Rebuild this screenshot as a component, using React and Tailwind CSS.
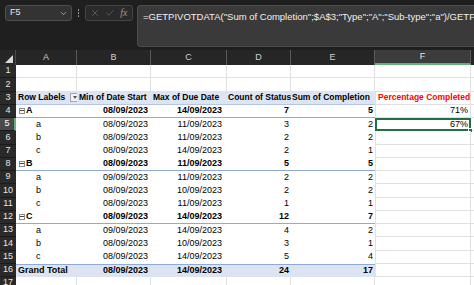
import React from 'react';
import { X, Check, ChevronDown } from 'lucide-react';

const cols = [
  { key: 'A', w: 'w-[61px]' },
  { key: 'B', w: 'w-[74px]' },
  { key: 'C', w: 'w-[76px]' },
  { key: 'D', w: 'w-[64px]' },
  { key: 'E', w: 'w-[84px]' },
  { key: 'F', w: 'w-[96px]' },
];

// pivot rows
const rows = [
  { n: 4, label: 'A', start: '08/09/2023', due: '14/09/2023', count: '7', sum: '5', pct: '71%', kind: 'group' },
  { n: 5, label: 'a', start: '08/09/2023', due: '11/09/2023', count: '3', sum: '2', pct: '67%', kind: 'item', selected: true },
  { n: 6, label: 'b', start: '08/09/2023', due: '11/09/2023', count: '2', sum: '2', kind: 'item' },
  { n: 7, label: 'c', start: '08/09/2023', due: '14/09/2023', count: '2', sum: '1', kind: 'item' },
  { n: 8, label: 'B', start: '08/09/2023', due: '11/09/2023', count: '5', sum: '5', kind: 'group' },
  { n: 9, label: 'a', start: '09/09/2023', due: '11/09/2023', count: '2', sum: '2', kind: 'item' },
  { n: 10, label: 'b', start: '08/09/2023', due: '10/09/2023', count: '2', sum: '2', kind: 'item' },
  { n: 11, label: 'c', start: '08/09/2023', due: '11/09/2023', count: '1', sum: '1', kind: 'item' },
  { n: 12, label: 'C', start: '08/09/2023', due: '14/09/2023', count: '12', sum: '7', kind: 'group' },
  { n: 13, label: 'a', start: '09/09/2023', due: '14/09/2023', count: '4', sum: '2', kind: 'item' },
  { n: 14, label: 'b', start: '08/09/2023', due: '10/09/2023', count: '3', sum: '1', kind: 'item' },
  { n: 15, label: 'c', start: '08/09/2023', due: '14/09/2023', count: '5', sum: '4', kind: 'item' },
  { n: 16, label: 'Grand Total', start: '08/09/2023', due: '14/09/2023', count: '24', sum: '17', kind: 'total' },
];

function RowHead({ n, active }) {
  return (
    <div
      className={
        'w-[16px] shrink-0 h-full flex items-center justify-center text-[9px] border-b border-[#1a1a1a] ' +
        (active ? 'bg-[#4a4a4a] text-white border-r-2 border-r-[#5fb37a]' : 'bg-[#2a2a2a] text-[#e6e6e6]')
      }
    >
      {n}
    </div>
  );
}

function EmptyRow({ n }) {
  return (
    <div className="flex h-[13.25px]">
      <RowHead n={n} />
      {cols.map((c) => (
        <div key={c.key} className={c.w + ' shrink-0 h-full bg-white border-r border-b border-[#e1e1e1]'} />
      ))}
      <div className="flex-1 h-full bg-white border-b border-[#e1e1e1]" />
    </div>
  );
}

function MinusBox() {
  return (
    <span className="inline-flex w-[6px] h-[6px] border border-[#8a8a8a] items-center justify-center mr-[1px] bg-white">
      <span className="w-[4px] h-px bg-[#444]" />
    </span>
  );
}

function PivotRow({ r }) {
  const bold = r.kind !== 'item';
  const pivotBg =
    r.kind === 'total'
      ? 'bg-[#dce4f2] border-t border-[#8ea9db]'
      : r.kind === 'group'
      ? 'bg-white border-b border-[#8ea9db]'
      : 'bg-white';
  const w = bold ? 'font-bold' : '';
  return (
    <div className="flex h-[13.25px]">
      <RowHead n={r.n} active={r.selected} />
      <div className={'flex w-[359px] shrink-0 h-full text-[9px] text-black ' + pivotBg + ' ' + w}>
        <div className="w-[61px] shrink-0 flex items-center overflow-hidden whitespace-nowrap">
          {r.kind === 'group' && (
            <span className="flex items-center pl-[3px]">
              <MinusBox />
              {r.label}
            </span>
          )}
          {r.kind === 'item' && <span className="pl-[20px]">{r.label}</span>}
          {r.kind === 'total' && <span className="pl-[2px]">{r.label}</span>}
        </div>
        <div className="w-[74px] shrink-0 flex items-center justify-end pr-[3px]">{r.start}</div>
        <div className="w-[76px] shrink-0 flex items-center justify-end pr-[5px]">{r.due}</div>
        <div className="w-[64px] shrink-0 flex items-center justify-end pr-[2px]">{r.count}</div>
        <div className="w-[84px] shrink-0 flex items-center justify-end pr-[2px]">{r.sum}</div>
      </div>
      <div
        className={
          'w-[96px] shrink-0 h-full bg-white flex items-center justify-end text-[9px] text-black relative ' +
          (r.selected ? 'border-2 border-[#1e7145] pr-[1px]' : 'border-l border-r border-b border-[#e1e1e1] pr-[2px]')
        }
      >
        {r.pct}
        {r.selected && (
          <span className="absolute right-[-4px] bottom-[-4px] w-[5px] h-[5px] bg-[#1e7145] border border-white" />
        )}
      </div>
      <div className="flex-1 h-full bg-white border-b border-[#e1e1e1]" />
    </div>
  );
}

export default function App() {
  const formula =
    '=GETPIVOTDATA("Sum of Completion";$A$3;"Type";"A";"Sub-type";"a")/GETPIVOTDATA("Count of Status";$A$3;"Type";"A";"Sub-type";"a")';

  return (
    <div className="w-[474px] h-[285px] overflow-hidden bg-[#1f1f1f] font-['Liberation_Sans',sans-serif]">
      {/* Formula bar */}
      <div className="flex items-start h-[50px] pt-[5px]">
        <div className="ml-[5px] w-[67px] h-[16px] shrink-0 rounded-[3px] bg-[#333333] border border-[#4d4d4d] flex items-center justify-between pl-[4px] pr-[3px] text-[9px] text-[#e8e8e8]">
          <span>F5</span>
          <ChevronDown size={9} strokeWidth={2} className="text-[#bdbdbd]" />
        </div>
        <div className="w-[13px] shrink-0 flex flex-col items-center pt-[4px] gap-[1.5px]">
          <span className="w-[1.5px] h-[1.5px] bg-[#aaa] rounded-full" />
          <span className="w-[1.5px] h-[1.5px] bg-[#aaa] rounded-full" />
          <span className="w-[1.5px] h-[1.5px] bg-[#aaa] rounded-full" />
        </div>
        <div className="w-[48px] h-[16px] shrink-0 rounded-[3px] bg-[#2a2a2a] border border-[#454545] flex items-center justify-around px-[2px] text-[#777]">
          <X size={10} strokeWidth={1.5} />
          <Check size={10} strokeWidth={1.5} />
          <span className="font-['Liberation_Serif',serif] italic text-[10px] text-[#9a9a9a] leading-none">fx</span>
        </div>
        <div className="ml-[4px] flex-1 h-[42px] rounded-l-[4px] bg-[#3a3a3a] border border-r-0 border-[#4d4d4d] pl-[5px] pt-[6px] overflow-hidden">
          <div className="whitespace-nowrap text-[9.5px] text-[#f0f0f0] leading-none">{formula}</div>
        </div>
      </div>

      {/* Column headers */}
      <div className="flex h-[15px] bg-[#262626]">
        <div className="w-[16px] shrink-0 h-full relative border-r border-[#4a4a4a]">
          <span className="absolute right-[2px] bottom-[2px] w-0 h-0 border-l-[8px] border-l-transparent border-b-[8px] border-b-[#d8d8d8]" />
        </div>
        {cols.map((c) => (
          <div
            key={c.key}
            className={
              c.w +
              ' shrink-0 h-full flex items-center justify-center text-[9px] ' +
              (c.key === 'F'
                ? 'bg-[#3c3c3c] text-[#e8e8e8] border-b-2 border-[#5fb37a] border-r border-r-[#5a5a5a]'
                : 'text-[#cfcfcf] border-r border-[#5a5a5a]')
            }
          >
            {c.key}
          </div>
        ))}
        <div className="flex-1" />
      </div>

      <EmptyRow n={1} />
      <EmptyRow n={2} />

      {/* Pivot header row */}
      <div className="flex h-[13.25px]">
        <RowHead n={3} />
        <div className="flex w-[359px] shrink-0 h-full bg-[#dde5f3] border-b border-[#b4c6e7] text-[8.5px] font-bold text-black whitespace-nowrap">
          <div className="w-[61px] shrink-0 flex items-center pl-[2px] overflow-hidden">
            <span>Row Labels</span>
            <span className="ml-[5px] w-[9px] h-[9px] shrink-0 border border-[#a6a6a6] bg-[#f2f2f2] flex items-center justify-center">
              <span className="w-0 h-0 border-l-[2.5px] border-r-[2.5px] border-t-[3px] border-l-transparent border-r-transparent border-t-[#555]" />
            </span>
          </div>
          <div className="w-[74px] shrink-0 flex items-center pl-[2px] overflow-hidden">Min of Date Start</div>
          <div className="w-[76px] shrink-0 flex items-center pl-[2px] overflow-hidden">Max of Due Date</div>
          <div className="w-[64px] shrink-0 flex items-center pl-[1px] overflow-hidden">Count of Status</div>
          <div className="w-[84px] shrink-0 flex items-center pl-[1px] overflow-hidden">Sum of Completion</div>
        </div>
        <div className="w-[96px] shrink-0 h-full bg-white border-l border-r border-b border-[#e1e1e1] flex items-center pl-[2px] text-[8.5px] font-bold text-[#ff0000] whitespace-nowrap overflow-hidden">
          Percentage Completed
          <span className="ml-[1px] w-[6px] h-[7px] shrink-0 border border-[#ff6b6b] flex flex-col justify-center gap-px px-px">
            <span className="h-px bg-[#ff6b6b]" />
            <span className="h-px bg-[#ff6b6b]" />
          </span>
        </div>
        <div className="flex-1 h-full bg-white border-b border-[#e1e1e1]" />
      </div>

      {rows.map((r) => (
        <PivotRow key={r.n} r={r} />
      ))}

      <EmptyRow n={17} />
    </div>
  );
}
